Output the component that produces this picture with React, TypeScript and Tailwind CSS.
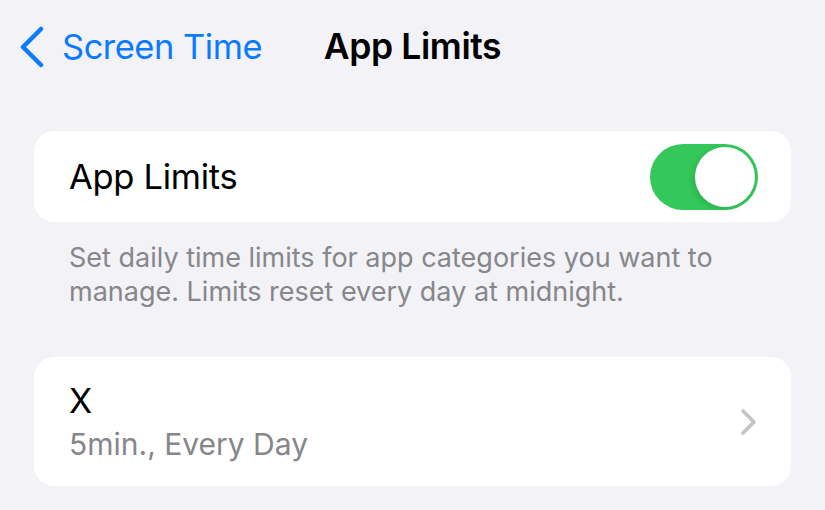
const font = { fontFamily: 'Inter, "Noto Sans", sans-serif' };

const BackChevron = () => (
    <svg width="26" height="42" viewBox="0 0 26 42" fill="none">
        <path d="M22 3 L4 21 L22 39" stroke="#0a7aff" strokeWidth="4.5" strokeLinecap="round" strokeLinejoin="round" />
    </svg>
);

const RowChevron = () => (
    <svg width="18" height="28" viewBox="0 0 18 28" fill="none">
        <path d="M3 3 L14 14 L3 25" stroke="#c4c4c7" strokeWidth="3.6" strokeLinecap="round" strokeLinejoin="round" />
    </svg>
);

const Toggle = ({ on }: { on: boolean }) => (
    <div className={`w-[108px] h-[66px] rounded-full p-[3px] flex ${on ? 'bg-[#34c759] justify-end' : 'bg-[#e9e9ea] justify-start'}`}>
        <div className="w-[60px] h-[60px] rounded-full bg-white shadow-[-2px_2px_6px_rgba(0,0,0,0.12)]" />
    </div>
);

const App = () => {
    return (
        <div className="w-[825px] h-[510px] bg-[#f2f2f7] overflow-hidden" style={font}>
            {/* Nav bar */}
            <div className="grid grid-cols-[1fr_auto_1fr] items-center h-[94px]">
                <div className="flex items-center gap-[17px] pl-[19px]">
                    <BackChevron />
                    <span className="text-[#0a7aff] text-[34.5px] tracking-[-0.5px]">Screen Time</span>
                </div>
                <span className="text-black text-[35.5px] font-semibold tracking-[-0.4px]">App Limits</span>
                <div />
            </div>

            {/* Toggle group */}
            <div className="mx-[34px] mt-[37px] h-[91px] bg-white rounded-[20px] flex items-center justify-between pl-[35px] pr-[33px]">
                <span className="text-black text-[34.5px] tracking-[-0.3px]">App Limits</span>
                <Toggle on />
            </div>
            <p className="mx-[69px] mt-[19px] text-[27px] leading-[34px] text-[#86868b] tracking-[0px]">
                Set daily time limits for app categories you want to manage. Limits reset every day at midnight.
            </p>

            {/* Limit entries */}
            <div className="mx-[34px] mt-[48px] h-[129px] bg-white rounded-[20px] flex items-center justify-between pl-[35px] pr-[33px]">
                <div className="flex flex-col">
                    <span className="text-black text-[34px] leading-[44px] tracking-[-0.4px]">X</span>
                    <span className="text-[#86868b] text-[30px] leading-[42px] tracking-[0px]">5min., Every Day</span>
                </div>
                <RowChevron />
            </div>
        </div>
    );
};

export default App;
